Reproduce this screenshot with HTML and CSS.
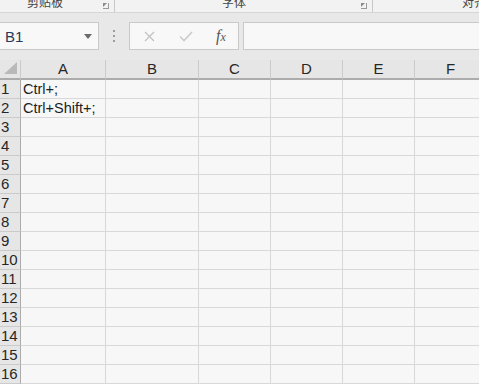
FILE: index.html
```html
<!DOCTYPE html>
<html lang="zh-CN">
<head>
    <meta charset="UTF-8">
    <title>Excel - 快捷键</title>
    <link rel="stylesheet" href="styles.css">
</head>
<body>
    <div class="ribbon">
        <div class="group group-clip">
            <span class="group-label">剪贴板</span>
            <span class="launcher"></span>
        </div>
        <div class="group group-font">
            <span class="group-label">字体</span>
            <span class="launcher"></span>
        </div>
        <div class="group group-align">
            <span class="group-label">对齐方式</span>
        </div>
    </div>

    <div class="formula-bar">
        <div class="name-box">
            <span>B1</span>
            <svg class="caret" width="8" height="5" viewBox="0 0 8 5"><path d="M0 0h8L4 5z" fill="#6a6a6a"/></svg>
        </div>
        <div class="grip">
            <span></span><span></span><span></span>
        </div>
        <div class="fx-box">
            <svg class="fx-icon" width="11" height="11" viewBox="0 0 11 11"><path d="M1 1l9 9M10 1l-9 9" stroke="#c2c2c2" stroke-width="1.3" fill="none"/></svg>
            <svg class="fx-icon" width="14" height="11" viewBox="0 0 14 11"><path d="M1 5.5l4 4L13 1" stroke="#cbcbcb" stroke-width="1.6" fill="none"/></svg>
            <span class="fx-label">f<small>x</small></span>
        </div>
        <div class="formula-input"></div>
    </div>

    <div class="sheet">
        <div class="corner">
            <svg width="13" height="12" viewBox="0 0 13 12"><path d="M13 0v12H0z" fill="#b9b9b9"/></svg>
        </div>
        <div class="col-head">A</div>
        <div class="col-head">B</div>
        <div class="col-head">C</div>
        <div class="col-head">D</div>
        <div class="col-head">E</div>
        <div class="col-head">F</div>
    </div>
    <div class="sheet rows" id="rows"></div>

    <script>
        // cell contents, row -> text in column A
        var data = { 1: 'Ctrl+;', 2: 'Ctrl+Shift+;' };
        var rows = document.getElementById('rows');
        for (var r = 1; r <= 16; r++) {
            var head = document.createElement('div');
            head.className = 'row-head';
            head.textContent = r;
            rows.appendChild(head);
            for (var c = 0; c < 6; c++) {
                var cell = document.createElement('div');
                cell.className = 'cell';
                if (c === 0 && data[r]) cell.textContent = data[r];
                rows.appendChild(cell);
            }
        }
    </script>
</body>
</html>
```

FILE: styles.css
```css
* { box-sizing: border-box; margin: 0; padding: 0; }
body {
    font-family: "Liberation Sans", Arial, "Noto Sans CJK SC", sans-serif;
    background: #e8e8e8;
    color: #222;
    width: 479px;
    height: 384px;
    overflow: hidden;
}

/* ribbon group labels, cut off at the top */
.ribbon {
    display: flex;
    height: 13px;
    background: #f2f2f2;
    border-bottom: 1px solid #d6d6d6;
    overflow: hidden;
}
.group {
    display: flex;
    flex-shrink: 0;
    align-items: flex-end;
    height: 12px;
    border-right: 1px solid #c8c8c8;
}
.group-clip { width: 115px; padding-left: 27px; }
.group-font { width: 258px; padding-left: 107px; }
.group-align { flex: 1 0 auto; padding-left: 89px; border-right: none; }
.group-label {
    font-family: "Noto Sans CJK SC", sans-serif;
    font-size: 12px;
    line-height: 12px;
    color: #444;
    margin-bottom: 4px;
    white-space: nowrap;
}
.launcher {
    width: 6px;
    height: 6px;
    margin: 0 5px 3px auto;
    border-left: 1px solid #9a9a9a;
    border-bottom: 1px solid #9a9a9a;
    transform: rotate(-90deg);
    position: relative;
}
.launcher::after {
    content: "";
    position: absolute;
    right: 0;
    top: 0;
    border-top: 4px solid #8a8a8a;
    border-left: 4px solid transparent;
}

/* name box + formula bar */
.formula-bar {
    display: flex;
    align-items: center;
    height: 47px;
    padding-bottom: 1px;
}
.name-box {
    display: flex;
    align-items: center;
    width: 99px;
    height: 28px;
    background: #f8f8f8;
    border: 1px solid #c9c9c9;
    border-left: none;
    padding: 0 6px 0 5px;
    font-size: 15px;
    color: #1f3a5f;
}
.caret { margin-left: auto; }
.grip {
    display: flex;
    flex-direction: column;
    gap: 3px;
    width: 30px;
    align-items: center;
}
.grip span {
    width: 2px;
    height: 2px;
    background: #9c9c9c;
}
.fx-box {
    display: flex;
    align-items: center;
    width: 110px;
    height: 28px;
    background: #f8f8f8;
    border: 1px solid #c9c9c9;
    padding-left: 14px;
    gap: 24px;
}
.fx-label {
    font-family: "Liberation Serif", serif;
    font-style: italic;
    font-size: 16px;
    color: #555;
    margin-left: -1px;
}
.fx-label small { font-size: 12px; }
.formula-input {
    flex: 1;
    height: 28px;
    margin-left: 4px;
    margin-right: -4px;
    background: #f8f8f8;
    border: 1px solid #c9c9c9;
}

/* grid */
.sheet {
    display: grid;
    grid-template-columns: 21px 85px 93px 72px 72px 72px 72px;
    width: 487px;
}
.corner, .col-head {
    height: 20px;
    background: #e6e6e6;
    border-right: 1px solid #cbcbcb;
    border-bottom: 2px solid #acacac;
}
.corner {
    display: flex;
    align-items: flex-end;
    justify-content: flex-end;
    padding: 0 3px 4px 0;
}
.col-head {
    text-align: center;
    font-size: 15px;
    line-height: 18px;
    color: #262626;
}
.row-head {
    height: 19px;
    background: #e6e6e6;
    border-right: 1px solid #acacac;
    border-bottom: 1px solid #cbcbcb;
    font-size: 15px;
    line-height: 18px;
    padding-left: 1px;
    color: #262626;
    overflow: hidden;
    white-space: nowrap;
}
.cell {
    height: 19px;
    background: #f7f7f7;
    border-right: 1px solid #d8d8d8;
    border-bottom: 1px solid #d8d8d8;
    font-size: 14.5px;
    line-height: 18px;
    padding-left: 2px;
    white-space: nowrap;
    color: #1e1e1e;
}
```
